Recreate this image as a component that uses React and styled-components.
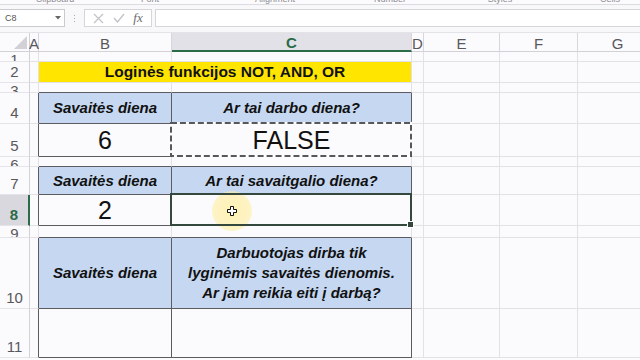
import React from 'react';
import styled, { createGlobalStyle } from 'styled-components';

const GRID = '#e3e1e6';
const DARK = '#5c5c60';
const GREEN = '#2b6b47';

const Global = createGlobalStyle`
  html, body { margin: 0; padding: 0; background: #fbfafc; }
  body { font-family: "Liberation Sans", Arial, sans-serif; overflow: hidden; }
  #root { width: 640px; height: 360px; }
`;

const Page = styled.div`
  width: 640px;
  height: 360px;
  overflow: hidden;
  display: flex;
  flex-direction: column;
  background: #fbfafc;
`;

const Ribbon = styled.div`
  height: 4px;
  flex: none;
  overflow: hidden;
  display: flex;
  align-items: flex-end;
  border-bottom: 1px solid #dcdbdf;
  font-size: 9px;
  line-height: 9px;
  color: #8d8c92;
`;

const RibbonLabel = styled.span`
  flex: none;
  width: ${p => p.$w}px;
  text-align: center;
  white-space: nowrap;
`;

const FormulaBar = styled.div`
  height: 28px;
  flex: none;
  box-sizing: border-box;
  display: flex;
  align-items: flex-start;
  padding-top: 4px;
  background: #f8f7f9;
  border-bottom: 1px solid #e4e3e7;
`;

const NameBox = styled.div`
  width: 65px;
  height: 18px;
  box-sizing: border-box;
  display: flex;
  align-items: center;
  justify-content: space-between;
  padding: 0 3px 0 5px;
  background: #fff;
  border: 1px solid #cbcace;
  border-left: none;
  font-size: 9px;
  color: #555;
`;

const Dots = styled.div`
  width: 19px;
  height: 18px;
  display: flex;
  flex-direction: column;
  align-items: center;
  justify-content: center;
  gap: 2px;
  & > i {
    width: 1px;
    height: 1px;
    background: #a9a8ad;
  }
`;

const EditBox = styled.div`
  width: 68px;
  height: 18px;
  box-sizing: border-box;
  display: flex;
  align-items: center;
  justify-content: space-around;
  padding: 0 4px;
  background: #fff;
  border: 1px solid #d6d5da;
`;

const Fx = styled.span`
  font-family: "Liberation Serif", "Times New Roman", serif;
  font-style: italic;
  font-size: 13px;
  color: #6a6a6e;
`;

const FormulaInput = styled.div`
  flex: 1;
  height: 18px;
  margin-left: 3px;
  box-sizing: border-box;
  background: #fff;
  border: 1px solid #d6d5da;
  border-right: none;
`;

const Sheet = styled.div`
  flex: none;
  display: grid;
  grid-template-columns: 30px 9px 133px 240px 12px 76px 78px 80px;
  grid-template-rows: 19px 10px 21px 10px 31px 33px 10px 28px 31px 12px 71px 49px;
`;

const Corner = styled.div`
  box-sizing: border-box;
  display: flex;
  align-items: flex-end;
  justify-content: flex-end;
  padding: 0 2px 2px 0;
  border-right: 1px solid #d3d1d6;
  border-bottom: 1px solid #d3d1d6;
`;

const ColHead = styled.div`
  box-sizing: border-box;
  display: flex;
  align-items: center;
  justify-content: center;
  white-space: nowrap;
  font-size: 15px;
  padding-top: 2px;
  font-weight: ${p => (p.$sel ? 700 : 400)};
  color: ${p => (p.$sel ? GREEN : '#58575c')};
  background: ${p => (p.$sel ? '#e2e1e7' : 'transparent')};
  border-right: 1px solid #d8d6db;
  border-bottom: ${p => (p.$sel ? `2px solid ${GREEN}` : '1px solid #d3d1d6')};
`;

const RowHead = styled.div`
  box-sizing: border-box;
  overflow: hidden;
  display: flex;
  flex-direction: column;
  align-items: center;
  font-size: 15px;
  line-height: 16px;
  font-weight: ${p => (p.$sel ? 700 : 400)};
  color: ${p => (p.$sel ? GREEN : '#58575c')};
  background: ${p => (p.$sel ? '#d9d8de' : 'transparent')};
  border-right: ${p => (p.$sel ? `2px solid ${GREEN}` : '1px solid #d3d1d6')};
  border-bottom: 1px solid #e6e4e9;
`;

const RowNum = styled.span`
  margin-top: auto;
  padding-bottom: 2px;
`;

const kinds = {
  title: 'font-weight: 700; font-size: 15.5px;',
  head: 'font-weight: 700; font-style: italic; font-size: 15px; line-height: 20px;',
  value: 'font-size: 25px;',
};

const Cell = styled.div`
  box-sizing: border-box;
  position: relative;
  min-width: 0;
  display: flex;
  align-items: center;
  justify-content: center;
  text-align: center;
  color: #111;
  grid-column: ${p => (p.$span ? `span ${p.$span}` : 'auto')};
  background: ${p => p.$bg || 'transparent'};
  border-right: 1px solid ${p => (p.$r ? DARK : GRID)};
  border-bottom: 1px solid ${p => (p.$b ? DARK : GRID)};
  z-index: ${p => (p.$top ? 2 : 'auto')};
  ${p => kinds[p.$kind] || ''}
`;

const Selection = styled.div`
  position: absolute;
  top: -2px;
  left: -2px;
  right: -1px;
  bottom: -1px;
  border: 2px solid #34483d;
  pointer-events: none;
  &::after {
    content: '';
    position: absolute;
    right: -4px;
    bottom: -4px;
    width: 5px;
    height: 5px;
    background: #34483d;
    border: 1px solid #fff;
  }
`;

const Ants = styled.svg`
  position: absolute;
  top: -2px;
  left: -2px;
  width: calc(100% + 3px);
  height: calc(100% + 3px);
  overflow: visible;
  pointer-events: none;
`;

const Halo = styled.div`
  position: absolute;
  left: 40px;
  top: -4px;
  width: 40px;
  height: 40px;
  border-radius: 50%;
  background: radial-gradient(circle, rgba(255, 238, 150, 0.7) 0%, rgba(255, 239, 160, 0.62) 62%, rgba(255, 242, 180, 0.12) 100%);
  display: flex;
  align-items: center;
  justify-content: center;
`;

const MarchingAnts = () => (
  <Ants viewBox="0 0 243 36" preserveAspectRatio="none">
    <rect x="1" y="1" width="241" height="34" fill="none" stroke="#ffffff" strokeWidth="2" />
    <rect x="1" y="1" width="241" height="34" fill="none" stroke="#58585c" strokeWidth="2" strokeDasharray="6 3" />
  </Ants>
);

const PlusCursor = () => (
  <svg width="10" height="10" viewBox="0 0 10 10">
    <path d="M3.5 0.5h3v3h3v3h-3v3h-3v-3h-3v-3h3z" fill="#fff" stroke="#111" strokeWidth="1" />
  </svg>
);

const COLS = ['A', 'B', 'C', 'D', 'E', 'F', 'G'];

const Blank = ({ r, b }) => <Cell $r={r} $b={b} />;
const Tail = () => (
  <>
    <Cell />
    <Cell />
    <Cell />
    <Cell />
  </>
);

const Row = ({ n, sel, children }) => (
  <>
    <RowHead $sel={sel}>
      <RowNum>{n}</RowNum>
    </RowHead>
    {children}
  </>
);

export default function App() {
  return (
    <Page>
      <Global />
      <Ribbon>
        <RibbonLabel $w={110}>Clipboard</RibbonLabel>
        <RibbonLabel $w={80}>Font</RibbonLabel>
        <RibbonLabel $w={170}>Alignment</RibbonLabel>
        <RibbonLabel $w={60}>Number</RibbonLabel>
        <RibbonLabel $w={160}>Styles</RibbonLabel>
        <RibbonLabel $w={60}>Cells</RibbonLabel>
      </Ribbon>
      <FormulaBar>
        <NameBox>
          <span>C8</span>
          <svg width="6" height="4" viewBox="0 0 6 4">
            <path d="M0 0h6L3 3.5z" fill="#666" />
          </svg>
        </NameBox>
        <Dots>
          <i />
          <i />
          <i />
        </Dots>
        <EditBox>
          <svg width="11" height="11" viewBox="0 0 11 11">
            <path d="M1 1l9 9M10 1l-9 9" stroke="#c4c3c8" strokeWidth="1.3" fill="none" />
          </svg>
          <svg width="12" height="10" viewBox="0 0 12 10">
            <path d="M1 5l3.5 4L11 1" stroke="#c4c3c8" strokeWidth="1.4" fill="none" />
          </svg>
          <Fx>fx</Fx>
        </EditBox>
        <FormulaInput />
      </FormulaBar>
      <Sheet>
        <Corner>
          <svg width="13" height="13" viewBox="0 0 13 13">
            <path d="M13 0V13H0z" fill="#d2d1d6" />
          </svg>
        </Corner>
        {COLS.map(c => (
          <ColHead key={c} $sel={c === 'C'}>
            {c}
          </ColHead>
        ))}

        <Row n="1">
          <Blank />
          <Blank />
          <Blank />
          <Tail />
        </Row>

        <Row n="2">
          <Blank />
          <Cell $span={2} $bg="#ffe500" $kind="title">
            Loginės funkcijos NOT, AND, OR
          </Cell>
          <Tail />
        </Row>

        <Row n="3">
          <Blank />
          <Blank b />
          <Blank b />
          <Tail />
        </Row>

        <Row n="4">
          <Blank r />
          <Cell $bg="#c6d8f1" $kind="head" $r $b>
            Savaitės diena
          </Cell>
          <Cell $bg="#c6d8f1" $kind="head" $r $b>
            Ar tai darbo diena?
          </Cell>
          <Tail />
        </Row>

        <Row n="5">
          <Blank r />
          <Cell $kind="value" $r $b>
            6
          </Cell>
          <Cell $kind="value" $r $b $top>
            FALSE
            <MarchingAnts />
          </Cell>
          <Tail />
        </Row>

        <Row n="6">
          <Blank />
          <Blank b />
          <Blank b />
          <Tail />
        </Row>

        <Row n="7">
          <Blank r />
          <Cell $bg="#c6d8f1" $kind="head" $r $b>
            Savaitės diena
          </Cell>
          <Cell $bg="#c6d8f1" $kind="head" $r $b>
            Ar tai savaitgalio diena?
          </Cell>
          <Tail />
        </Row>

        <Row n="8" sel>
          <Blank r />
          <Cell $kind="value" $r $b>
            2
          </Cell>
          <Cell $r $b $top>
            <Halo>
              <PlusCursor />
            </Halo>
            <Selection />
          </Cell>
          <Tail />
        </Row>

        <Row n="9">
          <Blank />
          <Blank b />
          <Blank b />
          <Tail />
        </Row>

        <Row n="10">
          <Blank r />
          <Cell $bg="#c6d8f1" $kind="head" $r $b>
            Savaitės diena
          </Cell>
          <Cell $bg="#c6d8f1" $kind="head" $r $b>
            Darbuotojas dirba tik
            <br />
            lyginėmis savaitės dienomis.
            <br />
            Ar jam reikia eiti į darbą?
          </Cell>
          <Tail />
        </Row>

        <Row n="11">
          <Blank r />
          <Cell $r $b />
          <Cell $r $b />
          <Tail />
        </Row>
      </Sheet>
    </Page>
  );
}
